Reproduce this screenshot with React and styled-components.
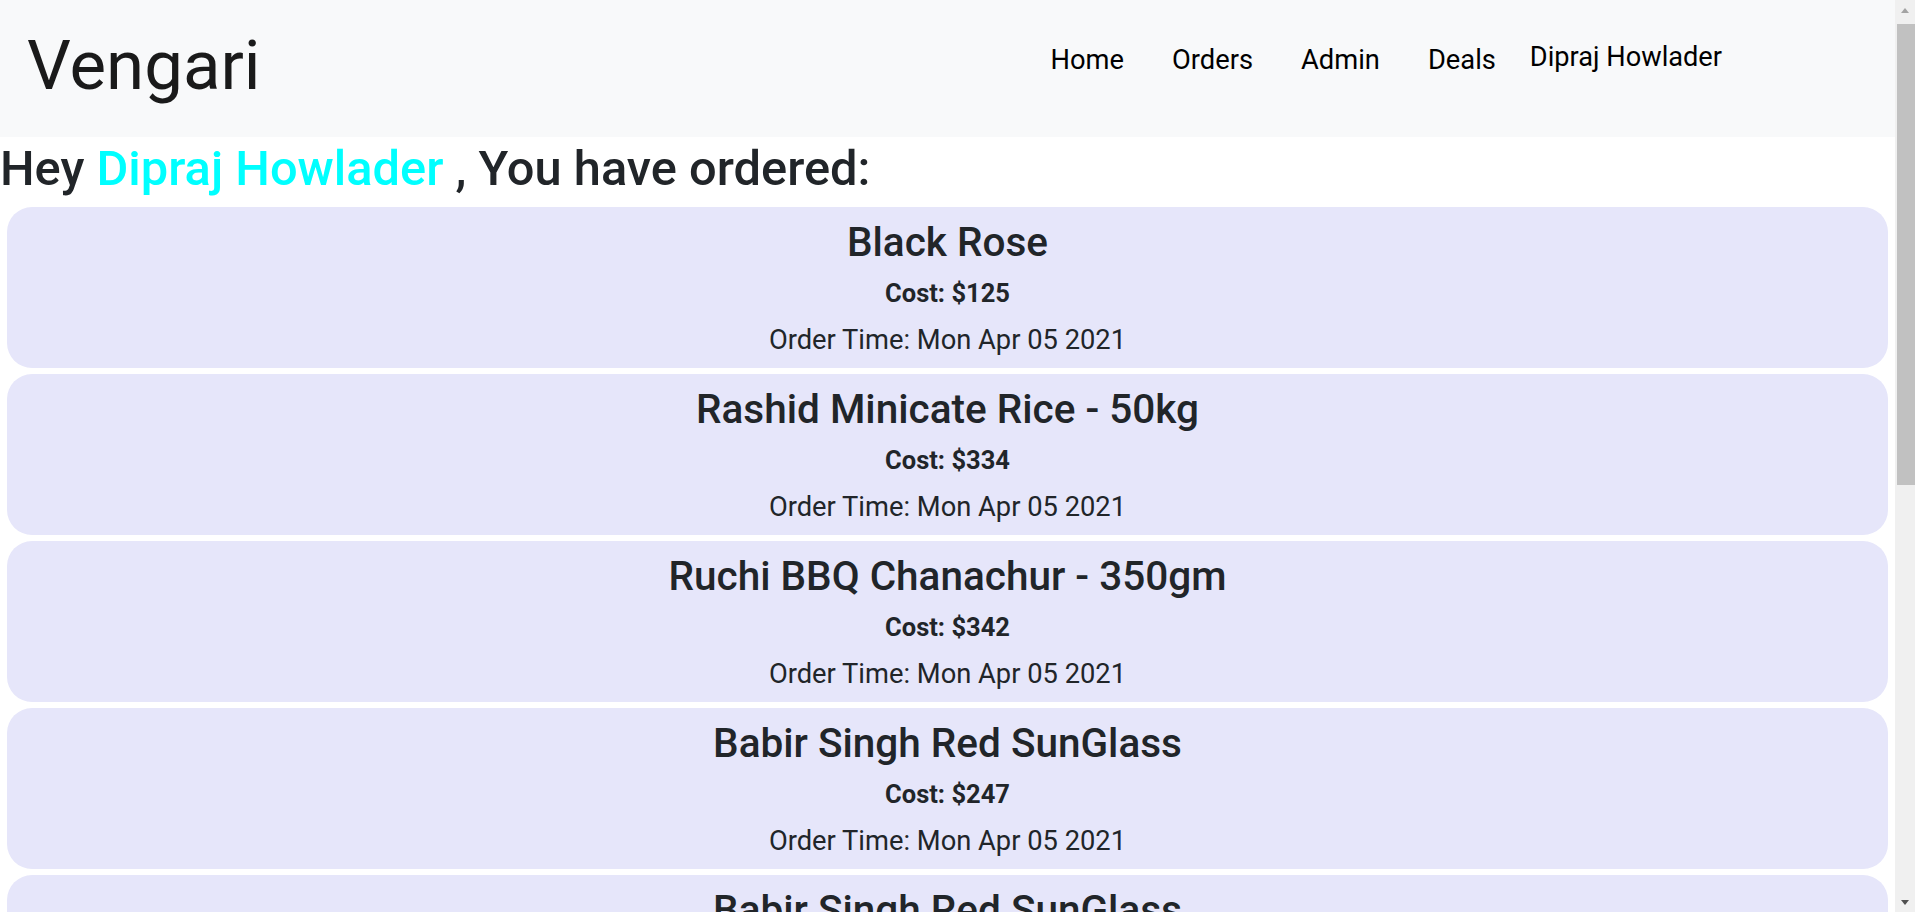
import React from "react";
import styled, { createGlobalStyle } from "styled-components";

const GlobalStyle = createGlobalStyle`
  html, body {
    margin: 0;
    padding: 0;
    height: 100%;
    overflow: hidden;
  }
  body {
    font-family: Roboto, "Noto Sans", "Liberation Sans", sans-serif;
    color: #212529;
    background: #fff;
  }
  #root {
    height: 100%;
  }
`;

const Shell = styled.div`
  display: flex;
  height: 100vh;
  overflow: hidden;
`;

const Main = styled.main`
  flex: 1;
  min-width: 0;
  overflow: hidden;
`;

const ScrollTrack = styled.div`
  display: flex;
  flex-direction: column;
  align-items: center;
  width: 20px;
  flex-shrink: 0;
  background: #f0f0f0;
`;

const Arrow = styled.div`
  height: 20px;
  width: 100%;
  display: flex;
  align-items: center;
  justify-content: center;

  &::after {
    content: "";
    width: 0;
    height: 0;
    border-left: 4px solid transparent;
    border-right: 4px solid transparent;
    ${({ $down }) =>
      $down
        ? "border-top: 5px solid #505050;"
        : "border-bottom: 5px solid #a3a3a3;"}
  }
`;

const Thumb = styled.div`
  align-self: stretch;
  height: 461px;
  margin: 4px 0 0 2px;
  background: #c1c1c1;
`;

const Spacer = styled.div`
  flex: 1;
`;

const Navbar = styled.nav`
  display: flex;
  align-items: flex-start;
  height: 137px;
  box-sizing: border-box;
  padding: 0 173px 0 27px;
  background: #f8f9fa;
`;

const Brand = styled.div`
  margin-top: 25px;
  font-size: 69px;
  line-height: 82px;
  color: #1a1a1a;
`;

const NavLinks = styled.div`
  display: flex;
  align-items: flex-start;
  margin-left: auto;
  margin-top: 44px;
`;

const NavLink = styled.a`
  padding: 0 24px;
  font-size: 27.3px;
  line-height: 32px;
  color: #000;
  text-decoration: none;
  cursor: pointer;
`;

const UserName = styled.span`
  margin: -3px 0 0 10px;
  font-size: 27.2px;
  line-height: 32px;
  color: #000;
`;

const Greeting = styled.h2`
  margin: 3px 0 0;
  font-size: 48.8px;
  font-weight: 500;
  line-height: 58px;
  color: #212529;
`;

const Highlight = styled.span`
  color: #00ffff;
`;

const OrderList = styled.div`
  display: flex;
  flex-direction: column;
  gap: 6px;
  padding: 9px 7px 20px;
`;

const OrderCard = styled.div`
  padding: 11px 0 12px;
  border-radius: 25px;
  background: #e6e6fa;
  text-align: center;
`;

const ItemName = styled.h3`
  margin: 0 0 12px;
  font-size: 40.5px;
  font-weight: 500;
  line-height: 48px;
`;

const Cost = styled.p`
  margin: 0 0 16px;
  font-size: 25.5px;
  font-weight: 700;
  line-height: 30px;
`;

const OrderTime = styled.p`
  margin: 0;
  font-size: 27.3px;
  line-height: 32px;
`;

const orders = [
  { name: "Black Rose", cost: 125 },
  { name: "Rashid Minicate Rice - 50kg", cost: 334 },
  { name: "Ruchi BBQ Chanachur - 350gm", cost: 342 },
  { name: "Babir Singh Red SunGlass", cost: 247 },
  { name: "Babir Singh Red SunGlass", cost: 247 },
  { name: "Black Rose", cost: 125 },
  { name: "Rashid Minicate Rice - 50kg", cost: 334 },
  { name: "Ruchi BBQ Chanachur - 350gm", cost: 342 },
  { name: "Babir Singh Red SunGlass", cost: 247 },
];

export default function App() {
  return (
    <>
      <GlobalStyle />
      <Shell>
        <Main>
          <Navbar>
            <Brand>Vengari</Brand>
            <NavLinks>
              <NavLink>Home</NavLink>
              <NavLink>Orders</NavLink>
              <NavLink>Admin</NavLink>
              <NavLink>Deals</NavLink>
              <UserName>Dipraj Howlader</UserName>
            </NavLinks>
          </Navbar>
          <Greeting>
            Hey <Highlight>Dipraj Howlader</Highlight> , You have ordered:
          </Greeting>
          <OrderList>
            {orders.map((order, i) => (
              <OrderCard key={i}>
                <ItemName>{order.name}</ItemName>
                <Cost>Cost: ${order.cost}</Cost>
                <OrderTime>Order Time: Mon Apr 05 2021</OrderTime>
              </OrderCard>
            ))}
          </OrderList>
        </Main>
        <ScrollTrack>
          <Arrow />
          <Thumb />
          <Spacer />
          <Arrow $down />
        </ScrollTrack>
      </Shell>
    </>
  );
}
